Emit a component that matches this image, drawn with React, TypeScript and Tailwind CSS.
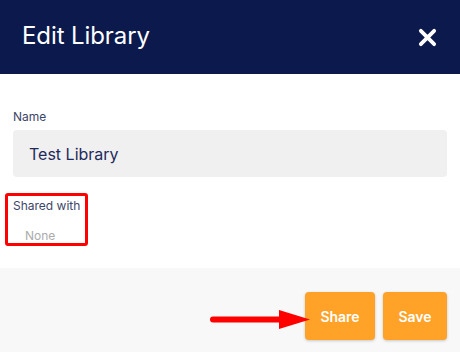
import React from 'react';

const App: React.FC = () => {
  return (
    <div className="w-[460px] h-[352px] flex flex-col bg-white relative overflow-hidden" style={{ fontFamily: 'Inter, "Noto Sans", sans-serif' }}>
      <div className="h-[74px] shrink-0 bg-[#0c194c] flex items-center justify-between pl-[22px] pr-[22px]">
        <h2 className="text-white text-[24px] font-normal tracking-[-0.1px] pb-[2px]">Edit Library</h2>
        <svg width="19" height="19" viewBox="0 0 20 20" className="mr-[1px]">
          <path d="M3 3 L17 17 M17 3 L3 17" stroke="#fff" strokeWidth="4" strokeLinecap="round" />
        </svg>
      </div>

      <div className="shrink-0 px-[13px] pt-[37px] pb-[26px]">
        <label className="block text-[12px] text-[#3c4668] leading-none mb-[7px]">Name</label>
        <div className="h-[47px] bg-[#f0f0f0] rounded-[4px] flex items-center px-[16px]">
          <span className="text-[16px] text-[#1f2a5c]">Test Library</span>
        </div>
        <div className="mt-[23px]">
          <div className="text-[12px] text-[#3c4668] leading-none">Shared with</div>
          <div className="text-[12px] text-[#ababab] leading-none mt-[18px] pl-[12px]">None</div>
        </div>
      </div>

      <div className="flex-1 bg-[#f8f8f8] flex justify-end items-start pt-[24px] pr-[13px] gap-[8px]">
        <button className="w-[70px] h-[48px] bg-[#ffa227] rounded-[4px] text-white text-[14px] font-semibold shadow-[0_1px_3px_rgba(0,0,0,0.2)]">Share</button>
        <button className="w-[64px] h-[48px] bg-[#ffa227] rounded-[4px] text-white text-[14px] font-semibold shadow-[0_1px_3px_rgba(0,0,0,0.2)]">Save</button>
      </div>

      {/* annotation overlays */}
      <div className="absolute left-[5px] top-[193px] w-[83px] h-[53px] border-[3px] border-[#ff0000] rounded-[3px]" />
      <svg className="absolute left-[205px] top-[308px]" width="108" height="22" viewBox="0 0 108 22">
        <line x1="8" y1="11.5" x2="78" y2="11.5" stroke="#ff0000" strokeWidth="6" strokeLinecap="round" />
        <polygon points="74,2 105,11.5 74,21" fill="#ff0000" />
      </svg>
    </div>
  );
};

export default App;
